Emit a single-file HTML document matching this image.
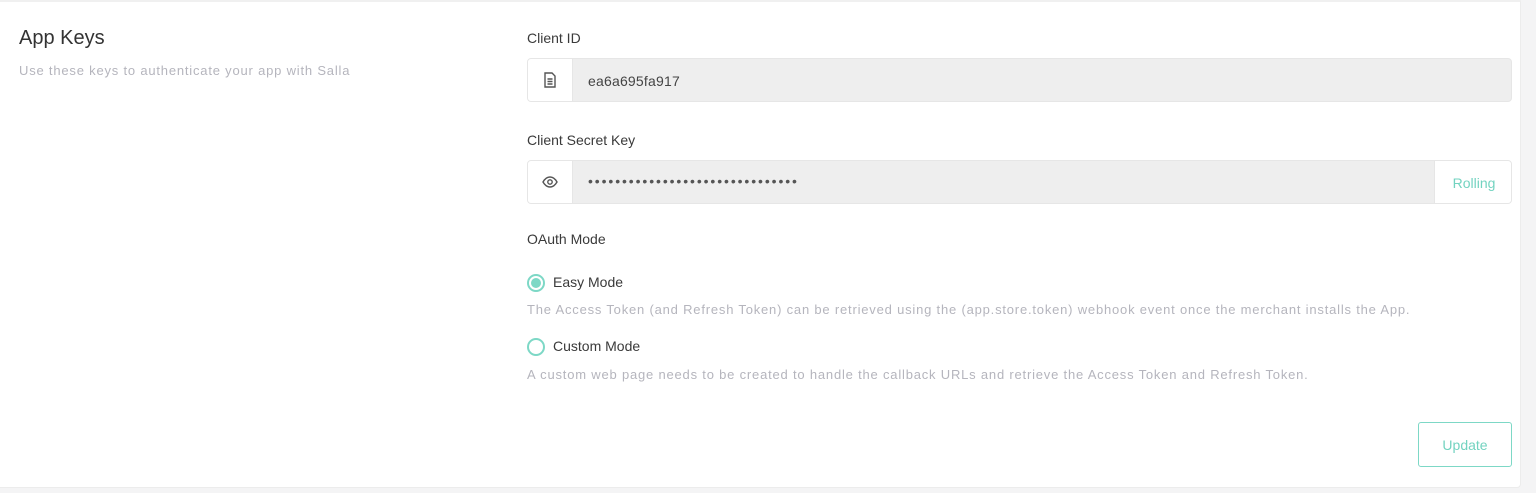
<!DOCTYPE html>
<html><head><meta charset="utf-8"><style>
*{box-sizing:border-box;margin:0;padding:0}
body{width:1536px;height:493px;background:#f4f4f5;font-family:"Liberation Sans",sans-serif;position:relative;overflow:hidden}
.card{position:absolute;left:0;top:0;width:1521px;height:488px;background:#fff;border-top:2px solid #f0f0f0;border-right:1px solid #ececec;border-bottom:1px solid #ececec;border-radius:0 0 4px 0}
.a{position:absolute;white-space:nowrap}
.lbl{font-size:14px;color:#3a3a3a}
.desc{font-size:13px;color:#b5b5bd;letter-spacing:0.8px}
.inp{position:absolute;left:527px;width:985px;height:44px;background:#eeeeee;border:1px solid #e6e6e6;border-radius:4px;overflow:hidden}
.ic{position:absolute;left:0;top:0;width:45px;height:100%;background:#fff;border-right:1px solid #e6e6e6;display:flex;align-items:center;justify-content:center}
.radio{position:absolute;width:18px;height:18px;border:2px solid #7dd8c6;border-radius:50%}
</style></head><body>
<div class="card"></div>
<div class="a" style="left:19px;top:27px;font-size:20px;color:#333">App Keys</div>
<div class="a desc" style="left:19px;top:63px">Use these keys to authenticate your app with Salla</div>

<div class="a lbl" style="left:527px;top:30px">Client ID</div>
<div class="inp" style="top:58px">
 <div class="ic"><svg width="14" height="16" viewBox="0 0 14 16" fill="none" stroke="#555" stroke-width="1.4"><path d="M2 1h7l3 3v11H2z"/><path d="M4.5 7h5M4.5 9.5h5M4.5 12h5"/></svg></div>
 <div class="a" style="left:60px;top:14px;font-size:14px;color:#444;letter-spacing:0.2px">ea6a695fa917</div>
</div>

<div class="a lbl" style="left:527px;top:132px">Client Secret Key</div>
<div class="inp" style="top:160px">
 <div class="ic"><svg width="16" height="12" viewBox="0 0 16 12" fill="none" stroke="#555" stroke-width="1.4"><path d="M1 6C3 2.5 5.5 1 8 1s5 1.5 7 5c-2 3.5-4.5 5-7 5S3 9.5 1 6z"/><circle cx="8" cy="6" r="2.2"/></svg></div>
 <div class="a" style="left:60px;top:12px;font-size:14px;color:#555;letter-spacing:1.9px">•••••••••••••••••••••••••••••••</div>
 <div class="a" style="left:906px;top:0;width:79px;height:44px;background:#fff;border-left:1px solid #e6e6e6;color:#73d3c0;font-size:14px;display:flex;align-items:center;justify-content:center">Rolling</div>
</div>

<div class="a lbl" style="left:527px;top:231px">OAuth Mode</div>
<div class="radio" style="left:527px;top:274px"><div style="position:absolute;left:2px;top:2px;width:10px;height:10px;border-radius:50%;background:#7dd8c6"></div></div>
<div class="a lbl" style="left:553px;top:274px">Easy Mode</div>
<div class="a desc" style="left:527px;top:302px">The Access Token (and Refresh Token) can be retrieved using the (app.store.token) webhook event once the merchant installs the App.</div>
<div class="radio" style="left:527px;top:338px"></div>
<div class="a lbl" style="left:553px;top:338px">Custom Mode</div>
<div class="a desc" style="left:527px;top:367px">A custom web page needs to be created to handle the callback URLs and retrieve the Access Token and Refresh Token.</div>

<div class="a" style="left:1418px;top:422px;width:94px;height:45px;border:1px solid #7dd8c6;border-radius:3px;color:#73d3c0;font-size:14px;display:flex;align-items:center;justify-content:center">Update</div>
</body></html>
